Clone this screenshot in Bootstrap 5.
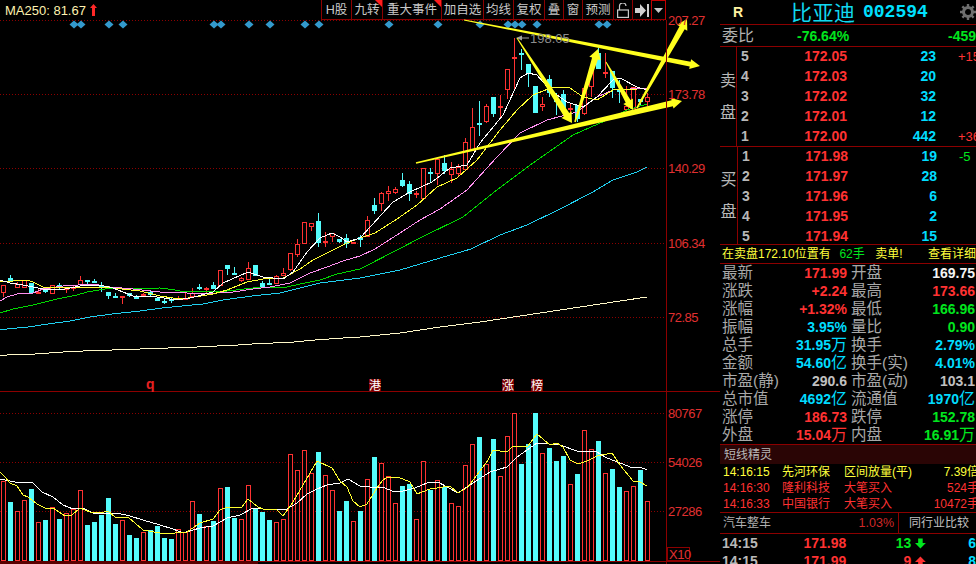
<!DOCTYPE html>
<html lang="zh-CN">
<head>
    <meta charset="UTF-8">
    <meta name="viewport" content="width=device-width, initial-scale=1.0">
    <title>比亚迪 002594</title>
    <link href="https://cdn.jsdelivr.net/npm/bootstrap@5.3.3/dist/css/bootstrap.min.css" rel="stylesheet">
    <style>
        html, body { background: #000; height: 564px; overflow: hidden; }
        body { font-family: "Liberation Sans", "Noto Sans CJK SC", sans-serif; color: #c0c0c0; font-size: 14px; line-height: 1; }
        .shell { width: 976px; height: 564px; overflow: hidden; }

        /* left side: toolbar + charts */
        .chart-side { width: 720px; height: 564px; flex: none; }
        .top-strip { height: 20px; flex: none; }
        .ma-legend { color: #fff2b0; font-size: 13px; padding-left: 5px; }
        .tool-bar { height: 20px; border-bottom: 1px solid #8c0000; }
        .tool-btn { position: relative; height: 20px; border-left: 1px solid #8c0000; font-size: 12.5px; color: #c8c8c8; }
        .tool-end { border-right: 1px solid #8c0000; }
        .tool-hot { border: 1px solid #c00000; border-bottom: 0; }
        .w-15 { width: 15px; } .w-19 { width: 19px; } .w-30 { width: 30px; } .w-31 { width: 31px; }
        .w-42 { width: 42px; } .w-59 { width: 59px; }
        .axis-gap { width: 54px; }
        .tool-flag::after { content: ""; position: absolute; top: 0; right: 0; border-top: 7px solid #ff1e1e; border-left: 7px solid transparent; }
        .pane { display: block; overflow: visible; flex: none; }
        .axis-text { font: 13px "Liberation Sans", sans-serif; letter-spacing: -.5px; fill: #e03030; }
        .tag-text { font: 12px "Noto Sans CJK SC", sans-serif; fill: #fff; }

        /* right side: quote panel */
        .quote-side { width: 256px; height: 564px; flex: none; overflow: hidden; }
        .quote-side > * { flex: none; }
        .line-b { border-bottom: 1px solid #8c0000; }
        .title-row { height: 25px; position: relative; }
        .code-r { color: #fff2a0; font-weight: 700; font-size: 14px; width: 71px; padding-left: 13px; }
        .stock-name { color: #10d8f0; font-size: 21px; letter-spacing: .5px; width: 72px; }
        .stock-code { color: #00e0ff; font: 700 18px "Liberation Mono", monospace; }
        .gear-box { margin-left: auto; }
        .ratio-row { height: 22px; }
        .big-label { font-size: 16px; color: #b0b0b0; }
        .ratio-label { width: 77px; padding-left: 2px; }
        .num { font-weight: 700; font-size: 14px; }
        .c-red { color: #ff3232; }
        .c-green { color: #00e61e; }
        .c-cyan { color: #00dcff; }
        .c-gray { color: #c0c0c0; }
        .c-white { color: #f4f4f4; }
        .c-yellow { color: #ffff3c; }
        .book-part { height: 100px; }
        .book-part.buy-part { height: 98px; }
        .book-list { margin-top: -1px; }
        .side-label { width: 18px; border-right: 1px solid #8c0000; font-size: 16px; color: #b8b8b8; gap: 16px; }
        .book-row { height: 20px; }
        .lvl { width: 22px; padding-left: 4px; color: #b8b8b8; }
        .price-col { width: 88px; text-align: right; }
        .qty-col { width: 89px; text-align: right; }
        .diff-col { padding-left: 22px; font-size: 13px; white-space: nowrap; }
        .notice-row { height: 19px; font-size: 12px; color: #ffff3c; white-space: nowrap; padding-left: 2px; }
        .notice-b { width: 118px; }
        .notice-c { width: 36px; }
        .notice-d { width: 53px; }
        .stat-row { height: 18px; white-space: nowrap; }
        .stat-a { width: 127px; padding-left: 2px; flex: none; }
        .stat-b { width: 128px; padding-left: 4px; margin-right: -3px; flex: none; }
        .stat-label { font-size: 15.5px; color: #a8a8a8; }
        .unit { font-weight: 400; font-size: 16px; }
        .elf-head { height: 19px; background: #2a0505; padding-left: 4px; font-size: 12px; color: #b8b8b8; }
        .elf-row { height: 16px; font-size: 12px; white-space: nowrap; padding-left: 3px; }
        .elf-time { width: 59px; }
        .elf-name { width: 62px; }
        .elf-kind { width: 70px; }
        .elf-val { margin-left: auto; margin-right: -3px; }
        .sector-row { height: 21px; white-space: nowrap; }
        .sector-name { width: 124px; padding-left: 3px; font-size: 12px; color: #b0b0b0; }
        .sector-pct { color: #d02828; font-size: 12.5px; width: 50px; text-align: right; }
        .sector-btn { margin-left: 4px; padding-left: 10px; border-left: 1px solid #8c0000; height: 100%; font-size: 12px; }
        .tick-row { height: 18px; white-space: nowrap; padding-left: 2px; }
        .tick-time { width: 58px; color: #b8b8b8; }
        .tick-price { width: 68px; text-align: right; }
        .tick-vol { width: 66px; text-align: right; }
        .tick-arrow { margin-left: 4px; }
        .tick-last { margin-left: 42px; }
    </style>
</head>
<body>
<div class="shell d-flex">

    <!-- left: toolbar, K line, volume -->
    <div class="chart-side d-flex flex-column">
        <div class="top-strip d-flex align-items-center">
            <div class="ma-legend d-flex align-items-center gap-1 flex-grow-1">
                <span>MA250: 81.67</span>
                <svg width="7" height="12" viewBox="0 0 7 12"><path d="M3.5 0 L7 4 H5 V12 H2 V4 H0 Z" fill="#ff2828"/></svg>
            </div>
            <div class="tool-bar d-flex">
                <div class="tool-btn w-30 d-flex align-items-center justify-content-center">H股</div>
                <div class="tool-btn tool-flag w-31 d-flex align-items-center justify-content-center">九转</div>
                <div class="tool-btn tool-flag w-59 d-flex align-items-center justify-content-center">重大事件</div>
                <div class="tool-btn w-42 d-flex align-items-center justify-content-center">加自选</div>
                <div class="tool-btn w-30 d-flex align-items-center justify-content-center">均线</div>
                <div class="tool-btn w-31 d-flex align-items-center justify-content-center">复权</div>
                <div class="tool-btn w-19 d-flex align-items-center justify-content-center">叠</div>
                <div class="tool-btn w-19 d-flex align-items-center justify-content-center">窗</div>
                <div class="tool-btn w-31 d-flex align-items-center justify-content-center">预测</div>
                <div class="tool-btn w-19 d-flex align-items-center justify-content-center">
                    <svg width="12" height="15" viewBox="0 0 12 15" fill="none" stroke="#c8c8c8" stroke-width="1.2"><rect x=".6" y="7" width="10.8" height="7.4"/><path d="M2.5 7 V3.5 A3.2 3.2 0 0 1 9 3"/></svg>
                </div>
                <div class="tool-btn w-19 d-flex align-items-center justify-content-center">
                    <svg width="14" height="13" viewBox="0 0 14 13"><path d="M0 4 H5 V0 L11 6.5 L5 13 V9 H0 Z" fill="#d0d0d0"/><rect x="12" y="0" width="2" height="13" fill="#d0d0d0"/></svg>
                </div>
                <div class="tool-btn tool-hot tool-end w-15 d-flex align-items-center justify-content-center">
                    <svg width="9" height="5" viewBox="0 0 9 5"><path d="M0 0 H9 L4.5 5 Z" fill="#c8c8c8"/></svg>
                </div>
            </div>
            <div class="axis-gap"></div>
        </div>

        <svg id="pricePane" class="pane" width="720" height="372" viewBox="0 20 720 372">
            <text class="axis-text" x="668" y="25">207.27</text>
            <text class="axis-text" x="668" y="99">173.78</text>
            <text class="axis-text" x="668" y="173">140.29</text>
            <text class="axis-text" x="668" y="248">106.34</text>
            <text class="axis-text" x="668" y="322">72.85</text>
            <text x="146" y="389" font-family="Liberation Sans" font-size="14" font-weight="700" fill="#e62020">q</text>
            <rect x="369" y="379" width="12" height="12" fill="#7a0000"/><text class="tag-text" x="369" y="389.5">港</text>
            <rect x="502" y="379" width="12" height="12" fill="#7a0000"/><text class="tag-text" x="502" y="389.5">涨</text>
            <rect x="531" y="379" width="12" height="12" fill="#7a0000"/><text class="tag-text" x="531" y="389.5">榜</text>
            <text x="530" y="43" font-family="Liberation Sans" font-size="13" fill="#8c8c8c">198.05</text>
        </svg>

        <svg id="volPane" class="pane" width="720" height="172" viewBox="0 392 720 172">
            <text class="axis-text" x="668" y="418">80767</text>
            <text class="axis-text" x="668" y="467">54026</text>
            <text class="axis-text" x="668" y="516">27286</text>
            <rect x="667.5" y="547.5" width="22" height="13" fill="none" stroke="#8c0000"/>
            <text class="axis-text" x="669" y="559">X10</text>
        </svg>
    </div>

    <!-- right: quote panel -->
    <div class="quote-side d-flex flex-column">
        <div class="title-row line-b d-flex align-items-center">
            <div class="code-r">R</div>
            <div class="stock-name">比亚迪</div>
            <div class="stock-code">002594</div>
            <div class="gear-box">
                <svg width="16" height="16" viewBox="0 0 16 16"><circle cx="8" cy="8" r="4.5" fill="none" stroke="#6e6e6e" stroke-width="3"/><path d="M8 0 V16 M0 8 H16 M2.3 2.3 L13.7 13.7 M13.7 2.3 L2.3 13.7" stroke="#6e6e6e" stroke-width="2.4" stroke-dasharray="3 10 3"/></svg>
            </div>
        </div>

        <div class="ratio-row line-b d-flex align-items-center">
            <div class="ratio-label big-label">委比</div>
            <div class="num c-green">-76.64%</div>
            <div class="num c-green ms-auto">-459</div>
        </div>

        <div class="book-part line-b d-flex">
            <div class="side-label d-flex flex-column align-items-center justify-content-center"><span>卖</span><span>盘</span></div>
            <div class="flex-grow-1 book-list" id="sellRows"></div>
        </div>
        <div class="book-part buy-part line-b d-flex">
            <div class="side-label d-flex flex-column align-items-center justify-content-center"><span>买</span><span>盘</span></div>
            <div class="flex-grow-1 book-list" id="buyRows"></div>
        </div>

        <div class="notice-row line-b d-flex align-items-center">
            <div class="notice-b">在卖盘172.10位置有</div>
            <div class="notice-c c-green">62手</div>
            <div class="notice-d">卖单!</div>
            <div>查看详细</div>
        </div>

        <div id="statRows" class="line-b"></div>

        <div class="elf-head d-flex align-items-center">短线精灵</div>
        <div class="line-b">
            <div class="elf-row d-flex align-items-center c-yellow"><span class="elf-time">14:16:15</span><span class="elf-name">先河环保</span><span class="elf-kind">区间放量(平)</span><span class="elf-val">7.39倍</span></div>
            <div class="elf-row d-flex align-items-center c-red"><span class="elf-time">14:16:30</span><span class="elf-name">隆利科技</span><span class="elf-kind">大笔买入</span><span class="elf-val">524手</span></div>
            <div class="elf-row d-flex align-items-center c-red"><span class="elf-time">14:16:33</span><span class="elf-name">中国银行</span><span class="elf-kind">大笔买入</span><span class="elf-val">10472手</span></div>
        </div>

        <div class="sector-row line-b d-flex align-items-center">
            <div class="sector-name">汽车整车</div>
            <div class="sector-pct">1.03%</div>
            <div class="sector-btn d-flex align-items-center">同行业比较</div>
        </div>

        <div class="tick-row d-flex align-items-center num">
            <span class="tick-time">14:15</span><span class="tick-price c-red">171.98</span><span class="tick-vol c-green">13</span>
            <svg class="tick-arrow" width="11" height="11" viewBox="0 0 12 11"><path d="M3.5 0 H8.5 V5 H12 L6 11 L0 5 H3.5 Z" fill="#00e61e"/></svg>
            <span class="tick-last c-cyan">6</span>
        </div>
        <div class="tick-row d-flex align-items-center num">
            <span class="tick-time">14:15</span><span class="tick-price c-red">171.99</span><span class="tick-vol c-red">9</span>
            <svg class="tick-arrow" width="11" height="11" viewBox="0 0 12 11"><path d="M6 0 L12 6 H8.5 V11 H3.5 V6 H0 Z" fill="#ff3232"/></svg>
            <span class="tick-last c-cyan">8</span>
        </div>
    </div>
</div>

<script src="https://cdn.jsdelivr.net/npm/bootstrap@5.3.3/dist/js/bootstrap.bundle.min.js"></script>
<script>
    // ---- quote panel ----
    const sell = [[5, '172.05', '23', '+15', 'c-red'], [4, '172.03', '20'], [3, '172.02', '32'], [2, '172.01', '12'], [1, '172.00', '442', '+36', 'c-red']];
    const buy = [[1, '171.98', '19', '-5', 'c-green'], [2, '171.97', '28'], [3, '171.96', '6'], [4, '171.95', '2'], [5, '171.94', '15']];
    function bookHtml(rows) {
        return rows.map(r => `<div class="book-row d-flex align-items-center num">
            <span class="lvl">${r[0]}</span><span class="price-col c-red">${r[1]}</span><span class="qty-col c-cyan">${r[2]}</span>
            <span class="diff-col fw-normal ${r[4] || ''}">${r[3] || ''}</span></div>`).join('');
    }
    document.getElementById('sellRows').innerHTML = bookHtml(sell);
    document.getElementById('buyRows').innerHTML = bookHtml(buy);

    const stats = [
        ['最新', '171.99', 'c-red', '开盘', '169.75', 'c-white'],
        ['涨跌', '+2.24', 'c-red', '最高', '173.66', 'c-red'],
        ['涨幅', '+1.32%', 'c-red', '最低', '166.96', 'c-green'],
        ['振幅', '3.95%', 'c-cyan', '量比', '0.90', 'c-green'],
        ['总手', '31.95<span class="unit">万</span>', 'c-cyan', '换手', '2.79%', 'c-cyan'],
        ['金额', '54.60<span class="unit">亿</span>', 'c-cyan', '换手(实)', '4.01%', 'c-cyan'],
        ['市盈(静)', '290.6', 'c-gray', '市盈(动)', '103.1', 'c-gray'],
        ['总市值', '4692<span class="unit">亿</span>', 'c-cyan', '流通值', '1970<span class="unit">亿</span>', 'c-cyan'],
        ['涨停', '186.73', 'c-red', '跌停', '152.78', 'c-green'],
        ['外盘', '15.04<span class="unit">万</span>', 'c-red', '内盘', '16.91<span class="unit">万</span>', 'c-green']
    ];
    document.getElementById('statRows').innerHTML = stats.map(s => `<div class="stat-row d-flex align-items-center">
        <div class="stat-a d-flex justify-content-between align-items-center"><span class="stat-label">${s[0]}</span><span class="num ${s[2]}">${s[1]}</span></div>
        <div class="stat-b d-flex justify-content-between align-items-center"><span class="stat-label">${s[3]}</span><span class="num ${s[5]}">${s[4]}</span></div>
    </div>`).join('');

    // ---- charts ----
    const RED = '#ff3232', CYAN = '#54fcfc', LINE = '#8c0000';
    const barX = i => 3.33 + 7 * i;

    // [bodyTop, bodyBottom, wickTop, wickBottom, 'r'|'c'] in screen px
    const candles = [
        [285,292,285,297,'r'],[278,282,275,282,'c'],[284,287,282,288,'r'],[280,287,280,287,'r'],[283,293,283,294,'c'],[292,292,289,294,'r'],
        [287,292,287,293,'c'],[285,293,285,294,'r'],[285,288,283,289,'c'],[288,288,287,293,'r'],[287,287,285,291,'r'],[280,284,276,284,'r'],
        [280,282,280,284,'c'],[281,283,279,283,'c'],[285,288,282,292,'c'],[292,296,292,299,'c'],[296,298,293,298,'c'],[296,297,296,304,'r'],
        [293,296,293,297,'c'],[297,297,295,299,'c'],[294,294,293,296,'r'],[292,295,290,296,'c'],[298,301,298,301,'c'],[301,303,299,304,'c'],
        [299,301,298,303,'c'],[298,299,296,300,'r'],[298,299,293,299,'r'],[293,296,288,296,'r'],[287,289,284,290,'c'],[288,289,287,293,'r'],
        [285,289,282,289,'c'],[270,285,270,285,'r'],[265,269,265,275,'c'],[273,273,267,273,'c'],[278,280,277,282,'r'],[268,279,262,279,'r'],
        [265,276,265,276,'c'],[283,287,281,288,'c'],[283,285,279,285,'c'],[276,283,275,284,'r'],[273,275,268,276,'r'],[253,269,253,271,'r'],
        [244,254,239,257,'r'],[222,243,222,243,'r'],[223,226,223,231,'r'],[221,243,213,247,'c'],[241,241,232,247,'r'],[233,236,233,242,'r'],
        [239,242,239,243,'c'],[238,244,234,248,'c'],[242,243,242,244,'r'],[237,240,235,247,'c'],[220,236,216,236,'r'],[205,211,198,214,'c'],
        [193,203,192,211,'r'],[191,193,186,201,'r'],[189,192,187,194,'r'],[180,186,173,187,'c'],[184,194,181,201,'c'],[193,193,191,198,'r'],
        [168,198,168,198,'r'],[172,172,168,183,'c'],[159,173,159,185,'r'],[163,171,155,174,'c'],[169,174,162,183,'r'],[167,173,164,177,'r'],
        [142,169,138,169,'r'],[127,150,108,150,'r'],[123,123,101,136,'c'],[106,121,104,123,'r'],[97,114,97,117,'c'],[106,106,95,117,'r'],
        [69,89,69,99,'r'],[57,57,38,89,'r'],[53,53,49,70,'c'],[64,73,64,87,'c'],[86,113,86,113,'c'],[104,106,97,111,'r'],[79,93,75,97,'c'],
        [100,100,93,115,'c'],[94,110,90,115,'c'],[108,108,103,115,'r'],[105,119,105,122,'c'],[88,113,88,115,'r'],[70,86,70,97,'r'],
        [53,69,48,69,'c'],[72,72,53,78,'r'],[71,88,71,98,'c'],[90,90,80,103,'c'],[106,109,86,109,'r'],[87,108,87,108,'r'],[99,102,99,106,'c'],[97,101,93,106,'r']
    ];

    // volume bar tops
    const vols = [
        ['r',481],['c',502],['r',511],['r',500],['c',489],['r',522],['c',520],['r',507],['c',519],['r',513],['r',509],['r',490],['c',525],['c',522],['c',515],['c',498],
        ['c',524],['r',520],['c',535],['c',538],['r',532],['c',530],['c',526],['c',538],['c',539],['r',529],['r',532],['r',501],['c',514],['r',526],['c',521],['r',488],
        ['c',487],['c',518],['r',519],['r',485],['c',509],['c',512],['c',520],['r',522],['r',519],['r',454],['r',470],['r',450],['r',473],['c',452],['r',475],['r',490],
        ['c',511],['c',501],['r',521],['c',511],['r',479],['c',457],['r',463],['r',476],['r',503],['c',486],['c',484],['r',519],['r',461],['c',490],['r',480],['c',487],
        ['r',503],['r',506],['r',465],['r',444],['c',437],['r',464],['c',439],['r',476],['r',436],['r',413],['c',464],['c',444],['c',413],['r',453],['c',448],['c',461],
        ['c',456],['r',484],['c',474],['r',430],['r',449],['c',441],['r',473],['c',469],['c',487],['r',491],['r',486],['c',470],['r',501]
    ];

    const ma250 = [[0,356],[7,355],[35,354],[63,352],[83,351],[112,350],[140,349],[168,348],[197,347],[217,346],[238,345],[252,344],[273,343],[294,342],[315,340],[329,339],[343,338],[360,337],[400,333],[440,327],[480,322],[520,316],[560,310],[600,304],[647,297]];
    const ma120 = [[0,330],[7,329],[28,327],[48,324],[70,321],[90,317],[112,314],[140,311],[162,308],[182,306],[203,304],[223,300],[252,296],[280,293],[300,288],[320,283],[360,278],[400,270],[440,258],[471,249],[500,235],[527,225],[560,209],[593,192],[613,180],[637,172],[647,167]];
    const ma60 = [[0,313],[13,309],[33,305],[57,299],[77,295],[87,292],[105,289],[160,288],[175,290],[185,292],[213,291],[227,291],[253,288],[287,287],[300,284],[320,280],[337,274],[360,269],[399,249],[420,238],[463,217],[493,193],[533,163],[573,135],[607,120],[627,110],[647,104]];
    const ma20 = [[0,301],[7,297],[17,294],[33,293],[43,289],[63,286],[93,284],[110,287],[133,289],[160,292],[187,293],[217,293],[233,292],[253,289],[270,287],[290,283],[310,273],[327,267],[343,261],[360,256],[375,249],[400,233],[420,220],[440,209],[467,190],[497,157],[520,133],[547,120],[577,112],[597,97],[613,90],[647,88]];
    const ma10 = [[0,282],[13,281],[27,280],[33,282],[43,287],[73,287],[113,288],[140,291],[160,296],[173,298],[188,298],[213,294],[227,290],[247,282],[263,279],[283,278],[300,269],[313,260],[333,250],[347,243],[360,238],[375,233],[397,219],[417,205],[437,187],[457,178],[477,160],[500,130],[517,110],[533,95],[553,87],[570,88],[583,97],[597,100],[613,90],[637,89]];
    const ma5 = [[0,280],[10,283],[23,285],[33,287],[43,289],[60,290],[80,286],[100,285],[113,288],[133,296],[157,297],[177,300],[190,298],[213,292],[223,283],[248,272],[263,277],[283,279],[293,272],[307,252],[320,238],[332,233],[340,237],[347,242],[360,238],[393,202],[410,192],[432,182],[450,168],[467,165],[480,143],[503,115],[520,78],[528,73],[537,75],[550,90],[567,102],[583,107],[597,97],[613,80],[620,78],[637,87],[647,90]];

    const volYellow = [[0,472],[5,477],[10,483],[17,486],[23,495],[28,497],[37,504],[45,508],[53,508],[65,516],[72,515],[80,508],[90,512],[100,513],[108,511],[115,517],[128,517],[143,530],[160,533],[175,533],[187,532],[200,523],[213,519],[220,510],[227,507],[242,507],[248,499],[258,507],[263,509],[277,510],[283,516],[293,502],[303,485],[317,461],[332,468],[340,481],[347,487],[353,501],[360,507],[367,504],[377,488],[383,480],[388,477],[398,477],[410,482],[417,494],[430,489],[450,486],[458,493],[468,487],[477,475],[488,460],[493,450],[507,452],[513,446],[527,447],[537,434],[550,445],[557,443],[563,447],[570,460],[578,464],[587,461],[597,456],[612,453],[620,465],[633,481],[640,482],[647,486]];
    const volWhite = [[0,479],[10,481],[15,482],[32,482],[42,492],[53,497],[63,505],[73,509],[83,508],[93,513],[117,513],[130,516],[143,520],[160,525],[173,529],[183,533],[200,528],[213,526],[227,518],[240,515],[253,508],[263,509],[287,509],[297,503],[307,494],[317,489],[327,485],[340,483],[348,479],[360,486],[370,487],[382,487],[395,492],[403,491],[415,488],[427,483],[438,482],[458,493],[473,483],[490,472],[507,467],[517,457],[527,450],[537,443],[560,445],[577,451],[595,451],[607,458],[620,463],[633,468],[640,467],[647,470]];

    const poly = (pts, color) => `<polyline points="${pts.map(p => p.join(',')).join(' ')}" fill="none" stroke="${color}" shape-rendering="crispEdges"/>`;
    const dashed = y => `<line x1="0" x2="666" y1="${y + .5}" y2="${y + .5}" stroke="${LINE}" stroke-dasharray="1 2"/>`;

    // tapered hand drawn arrow, thin at the tail and thick at the head
    function arrow(x1, y1, x2, y2, tail, neck, head) {
        const a = Math.atan2(y2 - y1, x2 - x1), c = Math.cos(a), s = Math.sin(a), L = 10;
        const bx = x2 - c * L, by = y2 - s * L;
        const pt = (x, y, o) => `${(x - s * o).toFixed(1)},${(y + c * o).toFixed(1)}`;
        return `<polygon fill="#ffff1e" points="${pt(x1, y1, tail)} ${pt(bx, by, neck)} ${pt(bx, by, head)} ${x2},${y2} ${pt(bx, by, -head)} ${pt(bx, by, -neck)} ${pt(x1, y1, -tail)}"/>`;
    }

    let p = '';
    [20, 94, 168, 243, 317].forEach(y => p += dashed(y));
    [74,81,109,123,214,221,249,270,305,319,389,438,480,508,515,522,537,599,607].forEach(x => {
        p += `<polygon points="${x},20.5 ${x + 4.5},24.5 ${x},28.5 ${x - 4.5},24.5" fill="#3399cc"/>`;
    });
    p += '<g shape-rendering="crispEdges">';
    candles.forEach((c, i) => {
        const x = Math.round(barX(i)), color = c[4] === 'r' ? RED : CYAN;
        p += `<line x1="${x + .5}" x2="${x + .5}" y1="${c[2]}" y2="${c[3]}" stroke="${color}"/>`;
        if (c[1] - c[0] < 1) {
            p += `<rect x="${x - 2}" y="${c[0]}" width="5" height="1.5" fill="${color}"/>`;
        } else if (c[4] === 'r') {
            p += `<rect x="${x - 1.5}" y="${c[0] + .5}" width="4" height="${c[1] - c[0]}" fill="#000" stroke="${color}"/>`;
        } else {
            p += `<rect x="${x - 2}" y="${c[0]}" width="5" height="${c[1] - c[0]}" fill="${color}"/>`;
        }
    });
    p += '</g>';
    p += poly(ma250, '#fff8c8') + poly(ma120, '#20d0f0') + poly(ma60, '#00d800') + poly(ma20, '#ff90f0') + poly(ma10, '#ffff30') + poly(ma5, '#ffffff');
    p += `<path d="M516 38 L522 35.5 V37.5 H529 V38.5 H522 V40.5 Z" fill="#a0a0a0"/>`;
    p += arrow(464, 20, 700, 66, .6, 2.4, 5);
    p += arrow(416, 163, 682, 101, .7, 3, 5.5);
    p += arrow(517, 38, 572, 123, .5, 3.2, 6);
    p += arrow(575, 122, 598, 49, .8, 3, 6);
    p += arrow(606, 62, 633, 110, .5, 2.8, 5.5);
    p += arrow(637, 108, 687, 19, .8, 3, 6);
    p += `<line x1="666.5" x2="666.5" y1="20" y2="392" stroke="${LINE}"/>`;
    p += `<line x1="0" x2="720" y1="391.5" y2="391.5" stroke="${LINE}"/>`;
    document.getElementById('pricePane').insertAdjacentHTML('afterbegin', p);

    let v = '';
    [413, 462, 511].forEach(y => v += dashed(y));
    v += '<g shape-rendering="crispEdges">';
    vols.forEach((b, i) => {
        const x = Math.round(barX(i));
        if (b[0] === 'c') {
            v += `<rect x="${x - 2}" y="${b[1]}" width="5" height="${561 - b[1]}" fill="${CYAN}"/>`;
        } else {
            v += `<rect x="${x - 1.5}" y="${b[1] + .5}" width="4" height="${560 - b[1]}" fill="#000" stroke="${RED}"/>`;
        }
    });
    v += '</g>';
    v += poly(volWhite, '#ffffff') + poly(volYellow, '#ffff30');
    v += `<line x1="666.5" x2="666.5" y1="392" y2="564" stroke="${LINE}"/>`;
    v += `<line x1="0" x2="720" y1="561.5" y2="561.5" stroke="${LINE}"/>`;
    v += `<rect x="0" y="561" width="258" height="3" fill="#5a0000"/>`;
    document.getElementById('volPane').insertAdjacentHTML('afterbegin', v);
</script>
</body>
</html>
